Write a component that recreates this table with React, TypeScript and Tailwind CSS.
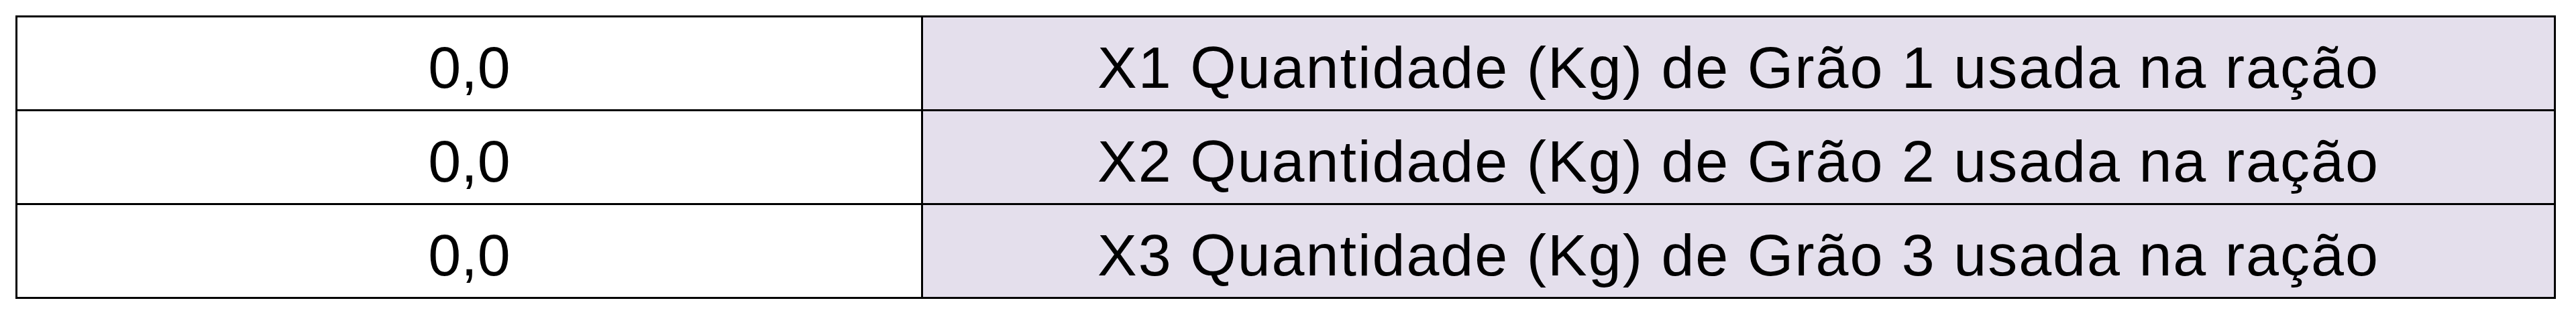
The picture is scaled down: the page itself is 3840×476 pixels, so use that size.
import React from 'react';

const rows = [
  { value: '0,0', label: 'X1 Quantidade (Kg) de Grão 1 usada na ração' },
  { value: '0,0', label: 'X2 Quantidade (Kg) de Grão 2 usada na ração' },
  { value: '0,0', label: 'X3 Quantidade (Kg) de Grão 3 usada na ração' },
];

export default function App() {
  return (
    <div className="w-[3840px] h-[476px] bg-white pl-[23px] pt-[23px]" style={{ fontFamily: '"Liberation Sans", Arial, sans-serif' }}>
      <div className="w-[3787px] grid grid-cols-[1347px_1fr] auto-rows-[137px] gap-[3px] p-[3px] bg-black">
        {rows.map((row) => (
          <React.Fragment key={row.label}>
            <div className="bg-white flex items-center justify-center pt-[13px] text-[88px] leading-none text-black">
              {row.value}
            </div>
            <div className="bg-[#e4dfec] flex items-center justify-center pt-[13px] text-[88px] leading-none tracking-[2px] text-black whitespace-nowrap">
              {row.label}
            </div>
          </React.Fragment>
        ))}
      </div>
    </div>
  );
}
